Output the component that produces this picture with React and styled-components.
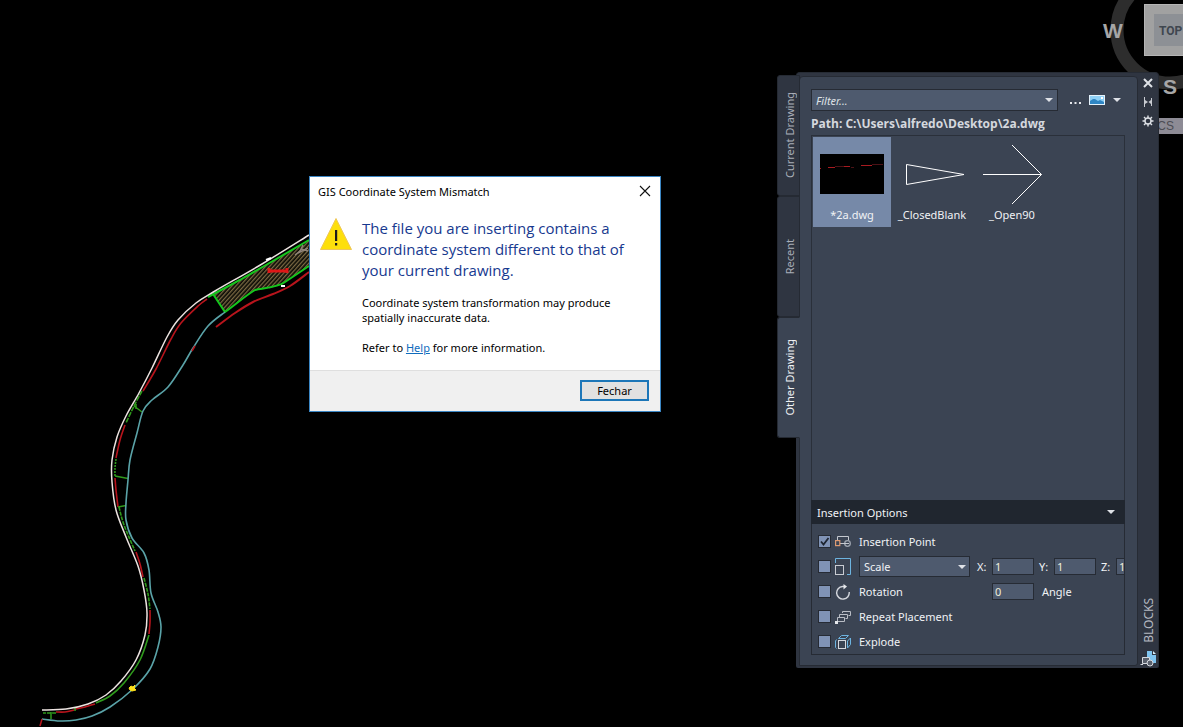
import React, { useState } from 'react';
import styled, { createGlobalStyle } from 'styled-components'

const GlobalStyle = createGlobalStyle`
    *{
        box-sizing:border-box;
    }
    body{
        margin:0;
        background:#000;
        font-family: "Noto Sans", "Open Sans", sans-serif;
        font-size:11px;
        line-height:15px;
    }
    button, input, select{
        font: inherit;
        color: inherit;
        margin:0;
    }
    h1, h2, p{
        margin:0;
    }
`

const Workspace = styled.main`
    position:relative;
    min-height:100vh;
    overflow:hidden;
    background:#000;
`

const Drawing = styled.svg`
    position:absolute;
    top:0;
    left:0;
    width:100%;
    height:100%;
    fill:none;
`

const Compass = styled.svg`
    position:absolute;
    top:0;
    right:0;
    font-family: "Liberation Sans", Arial, sans-serif;
    font-weight:bold;
    .face{
        font-family: Roboto, sans-serif;
    }
`

const Ucs = styled.button`
    position:absolute;
    top:118px;
    right:0;
    height:16px;
    padding:0 9px 0 2px;
    border:0;
    background:#8d8b95;
    color:#4c4c54;
    font-family: "Liberation Sans", Arial, sans-serif;
    font-size:12px;
    line-height:14px;
`

/* ---- blocks palette ---- */

const Palette = styled.section`
    position:absolute;
    top:72px;
    right:24px;
    height:calc(100vh - 131px);
    min-height:400px;
    display:flex;
    align-items:stretch;
    color:#f0f2f5;
`

const Tabs = styled.div`
    position:relative;
    display:flex;
    flex-direction:column;
    align-self:flex-start;
    margin:3px -4px 0 0;
    width:23px;
`

const Tab = styled.button`
    height:121px;
    padding:0 0 0 2px;
    display:flex;
    align-items:center;
    justify-content:center;
    border:1px solid #252a33;
    border-right-color: ${({ $active }) => ($active ? '#3b4453' : '#252a33')};
    border-radius:3px 0 0 3px;
    background: ${({ $active }) => ($active ? '#3b4453' : '#2f3541')};
    color: ${({ $active }) => ($active ? '#f0f2f5' : '#a9aeb8')};
    span{
        writing-mode:vertical-rl;
        transform: rotate(180deg);
    }
`

const Frame = styled.div`
    display:flex;
    width:363px;
    background:#2f3541;
    border:1px solid #262b34;
    border-width:1px 1px 0 0;
    border-radius:4px 4px 2px 2px;
`

const Panel = styled.div`
    flex:1;
    min-width:0;
    display:flex;
    flex-direction:column;
    margin:3px 0 2px 3px;
    padding:12px 12px 10px 11px;
    background:#3b4453;
    border:1px solid #262b34;
    border-radius:4px 4px 3px 0;
`

const Side = styled.div`
    width:20px;
    padding-bottom:1px;
    display:flex;
    flex-direction:column;
    align-items:center;
    color:#d5d8de;
`

const SideButton = styled.button`
    width:20px;
    height:19px;
    padding:0;
    border:0;
    background:none;
    line-height:0;
`

const SideTitle = styled.h2`
    margin-top:auto;
    margin-bottom:8px;
    font-size:12px;
    font-weight:normal;
    color:#b4b8c0;
    writing-mode:vertical-rl;
    transform: rotate(180deg);
`

const FilterRow = styled.div`
    display:flex;
    align-items:center;
    gap:8px;
    padding-right:4px;
`

const Combo = styled.div`
    flex:1;
    display:flex;
    align-items:center;
    height:22px;
    margin-right:4px;
    background:#4e5a6e;
    border:1px solid #262b34;
    input{
        flex:1;
        min-width:0;
        padding:0 4px;
        border:0;
        outline:0;
        background:none;
        font-style:italic;
        &::placeholder{
            color:#dfe2e7;
            opacity:1;
        }
    }
`

const IconButton = styled.button`
    padding:0;
    min-width:${({ $wide }) => ($wide ? '16px' : '8px')};
    height:16px;
    display:flex;
    align-items:center;
    justify-content:center;
    border:0;
    background:none;
`

const Path = styled.p`
    margin:5px 0 4px;
    font-family: "Open Sans", sans-serif;
    font-size:12px;
    font-weight:bold;
    color:#d5d8de;
    white-space:nowrap;
`

const Blocks = styled.div`
    flex:1;
    display:flex;
    align-items:flex-start;
    gap:2px;
    padding:1px;
    border:1px solid #2a303a;
    border-bottom:0;
`

const Block = styled.button`
    width:78px;
    height:90px;
    padding:5px 0 4px;
    display:flex;
    flex-direction:column;
    align-items:center;
    gap:1px;
    border:0;
    background: ${({ $selected }) => ($selected ? '#7689a8' : 'none')};
    white-space:nowrap;
`

const OptionsHeader = styled.button`
    height:24px;
    padding:0 10px 0 6px;
    display:flex;
    align-items:center;
    justify-content:space-between;
    border:0;
    background:#20262f;
`

const Options = styled.div`
    padding:5px 0 0 6px;
    border:1px solid #262b34;
    border-top:0;
    overflow:hidden;
`

const Option = styled.div`
    display:flex;
    align-items:center;
    height:25px;
    white-space:nowrap;
`

const Check = styled.label`
    flex:none;
    min-width:${({ $column }) => ($column ? '174px' : '0')};
    display:flex;
    align-items:center;
    gap:4px;
    svg{
        flex:none;
    }
    span{
        margin-left:4px;
    }
    input{
        appearance:none;
        width:13px;
        height:13px;
        border:1px solid #262b34;
        background:#8093b5;
    }
`

const CheckBox = styled.span`
    && {
        margin:0;
    }
    display:grid;
    > *{
        grid-area:1 / 1;
        margin:0;
    }
    svg{
        pointer-events:none;
    }
`

const SelectBox = styled.div`
    display:grid;
    align-items:center;
    flex:none;
    width:111px;
    height:21px;
    margin:0 7px 0 8px;
    select, svg{
        grid-area:1 / 1;
    }
    select{
        appearance:none;
        width:100%;
        height:21px;
        padding:0 4px;
        border:1px solid #262b34;
        border-radius:0;
        background:#4e5a6e;
    }
    svg{
        justify-self:end;
        margin-right:4px;
        pointer-events:none;
    }
`

const Field = styled.label`
    flex:none;
    display:flex;
    align-items:center;
    gap:8px;
    margin-right:5px;
    span{
        width:15px;
        margin-right:-8px;
    }
    input{
        width:42px;
        height:17px;
        padding:0 2px;
        border:1px solid #262b34;
        background:#4e5a6e;
        color:#f0eedc;
    }
`

/* ---- message box ---- */

const Dialog = styled.section`
    position:absolute;
    top:176px;
    left:309px;
    width:352px;
    border:1px solid #3b86c4;
    background:#fff;
    color:#000;
`

const TitleBar = styled.header`
    display:flex;
    align-items:center;
    justify-content:space-between;
    height:30px;
    padding:0 8px 2px;
    h1{
        font-size:11px;
        font-weight:normal;
    }
`

const CloseButton = styled.button`
    width:14px;
    height:14px;
    padding:0;
    border:0;
    background:none;
    line-height:0;
`

const Message = styled.div`
    display:flex;
    align-items:flex-start;
    gap:10px;
    padding:11px 16px 15px 10px;
    > svg{
        flex:none;
    }
    h2{
        margin-bottom:14px;
        font-family: "Open Sans", sans-serif;
        font-size:15px;
        line-height:21px;
        font-weight:normal;
        color:#17398f;
    }
    p + p{
        margin-top:15px;
    }
    a{
        color:#0f6cbd;
    }
`

const Footer = styled.footer`
    display:flex;
    justify-content:flex-end;
    padding:9px 11px 10px;
    border-top:1px solid #dfdfdf;
    background:#f0f0f0;
    button{
        width:69px;
        height:21px;
        padding:0;
        border:2px solid #1c76b8;
        background:#e1e1e1;
        line-height:15px;
    }
`

const Arrow = () => (
    <svg width="8" height="4" viewBox="0 0 8 4"><path d="M0 0h8L4 4z" fill="#dfe2e7" /></svg>
)

// Catmull-Rom spline through the survey points
const curve = (points) => {
    let d = `M${points[0]}`
    for (let i = 0; i < points.length - 1; i++) {
        const a = points[i - 1] || points[i]
        const b = points[i]
        const c = points[i + 1]
        const e = points[i + 2] || c
        d += `C${b[0] + (c[0] - a[0]) / 6} ${b[1] + (c[1] - a[1]) / 6} ${c[0] - (e[0] - b[0]) / 6} ${c[1] - (e[1] - b[1]) / 6} ${c}`
    }
    return d
}

const RED = '#b8141c'
const GREEN = '#2f9a1c'

const outer = [
    [309, 235], [262, 264], [215, 291], [196, 303], [178, 320], [167, 337], [152, 368], [139, 393],
    [126, 416], [117, 437], [112, 460], [112, 482], [116, 510], [126, 537], [138, 566], [144, 590],
    [147, 613], [145, 635], [136, 660], [121, 681], [106, 695], [88, 704], [66, 709], [42, 710],
]

const river = [
    [225, 312], [208, 326], [193, 348], [183, 365], [168, 387], [152, 400], [143, 411], [137, 433],
    [130, 460], [128, 480], [126, 503], [126, 520], [132, 538], [144, 553], [149, 570], [151, 593],
    [158, 612], [161, 627], [158, 647], [150, 669], [133, 689], [110, 707], [92, 716], [76, 720],
    [60, 721], [42, 719],
]

const segments = [
    { color: RED, points: [[207, 299], [198, 306], [181, 323], [171, 339], [156, 369], [143, 391]] },
    { color: GREEN, dash: '5 1', points: [[142, 391], [134, 406], [126, 423]] },
    { color: RED, points: [[125, 425], [120, 440], [116, 458]] },
    { color: GREEN, dash: '2 1', points: [[116, 459], [115, 468], [115, 477]] },
    { color: RED, points: [[115, 478], [116, 490], [118, 507]] },
    { color: GREEN, dash: '4 1', points: [[119, 507], [124, 525], [135, 551]] },
    { color: RED, points: [[136, 552], [140, 564], [143, 577]] },
    { color: GREEN, dash: '4 1', points: [[144, 578], [148, 594], [150, 609]] },
    { color: RED, points: [[150, 610], [150, 622], [149, 634]] },
    { color: GREEN, points: [[149, 635], [140, 660], [124, 683], [110, 696], [96, 703]] },
    { color: RED, points: [[95, 704], [85, 707], [75, 709]] },
    { color: GREEN, points: [[75, 708], [75, 711]] },
    { color: RED, points: [[74, 710], [65, 712], [56, 712]] },
    { color: GREEN, dash: '4 1', points: [[56, 713], [43, 713]] },
]

const Plan = () => (
    <Drawing aria-hidden="true">
        <defs>
            <pattern id="hatch" width="3" height="3" patternUnits="userSpaceOnUse" patternTransform="rotate(42)">
                <rect width="3" height="3" fill="#0b0b05" />
                <rect width="1.300" height="3" fill="#7c6a44" />
            </pattern>
        </defs>
        <path d="M213 294L309 240V266L285 282L272 288L255 290L225 312Z" fill="url(#hatch)" />
        <path d="M208 297L240 280L266 265L309 240" stroke="#14c71d" strokeWidth="2" />
        <path d="M213 294L225 312C235 305 245 296 255 290C262 288 277 288 285 282L309 266" stroke="#14c71d" strokeWidth="2" />
        <path d={curve([[216, 327], [235, 313], [253, 302], [273, 294], [290, 286], [309, 272]])} stroke={RED} strokeWidth="2" />
        {segments.map(({ color, dash, points }) => (
            <path key={points[0].join()} d={curve(points)} stroke={color} strokeWidth="1.6" strokeDasharray={dash} />
        ))}
        <path d="M134 406L142 412M136 404V409M115 476L128 478.500M118 507L126 505.500M51 712V719" stroke={GREEN} strokeWidth="1.500" />
        <path d={curve(river)} stroke="#5aa3a8" strokeWidth="1.600" />
        <path d="M195 346L192 351M42 719L40 726" stroke={RED} strokeWidth="1.500" />
        <path d={curve(outer)} stroke="#ece3e0" strokeWidth="1.500" />
        <path d="M270 271H286M269 268V273M287 268V273" stroke="#df1717" strokeWidth="3" />
        <path d="M266 260L271 258" stroke="#fff" strokeWidth="2" />
        <path d="M281 286H285" stroke="#fff" strokeWidth="2" />
        <path d="M295 255L300 251L303 245M298 253L308 248M301 249L308 251" stroke="#8f8378" strokeWidth="1.500" />
        <path d="M129 688L131 686L133 687L135 685L134 688L136 690L132 691L130 690Z" fill="#ffe21a" stroke="#ffe21a" />
    </Drawing>
)

const ViewCube = () => (
    <Compass width="83" height="100" viewBox="1100 0 83 100">
        <circle cx="1170" cy="30" r="53" fill="none" stroke="#2d2d2d" strokeWidth="13" />
        <rect x="1144" y="4" width="52" height="52" fill="#a1a1a1" />
        <rect x="1144.500" y="4.500" width="51" height="51" fill="none" stroke="#b5b5b5" />
        <rect x="1154" y="14" width="32" height="32" fill="#8d9095" />
        <text className="face" x="1159" y="35" fontSize="12" fill="#3f464f">TOP</text>
        <text x="1103" y="38" fontSize="21" fill="#a6a6a6">W</text>
        <text x="1163" y="94" fontSize="21" fill="#a6a6a6">S</text>
    </Compass>
)

const icons = {
    point: (
        <svg width="16" height="16" viewBox="0 0 16 16" fill="none">
            <path d="M2.500 6V2.500H13.500V6.500M5 9.500H10" stroke="#c4c8cf" />
            <rect x=".6" y="6.600" width="4.200" height="5" stroke="#dd9a72" strokeWidth="1.200" />
            <circle cx="12.500" cy="9.500" r="2.800" stroke="#9ea5b0" strokeWidth="1.300" />
            <path d="M8 9.500h6" stroke="#c4c8cf" />
        </svg>
    ),
    scale: (
        <svg width="16" height="17" viewBox="0 0 16 17" fill="none">
            <path d="M.5 5V.5H15.500V16.500H12" stroke="#6db4e0" />
            <rect x=".5" y="7.500" width="8" height="9" stroke="#c9ccd2" />
        </svg>
    ),
    rotation: (
        <svg width="16" height="16" viewBox="0 0 16 16" fill="none">
            <path d="M9 2.500H7.500A6.300 6.300 0 1 0 14.200 8" stroke="#d5d8de" strokeWidth="1.400" />
            <path d="M8.500 0L12 2.500L8.500 5.500Z" fill="#e6e8ec" />
        </svg>
    ),
    repeat: (
        <svg width="16" height="16" viewBox="0 0 16 16" fill="none" stroke="#b9bdc5">
            <path d="M7.500 4V2.500H15.500V6.500H13.500" />
            <path d="M4.500 8V5.500H12.500V9.500H10.500" />
            <path d="M2.500 12V8.500H9.500V12.500H3" />
            <rect x="0" y="12" width="3" height="3" fill="#e6e8ec" stroke="none" />
        </svg>
    ),
    explode: (
        <svg width="16" height="16" viewBox="0 0 16 16" fill="none">
            <rect x="3.500" y="6.500" width="7" height="8" stroke="#d5d8de" />
            <path d="M3.500 4.500L6.500 1.500H13.500L10.500 4.500Z" stroke="#6db4e0" />
            <path d="M12.500 7L15.500 4V10.500L12.500 14Z" stroke="#6db4e0" />
            <path d="M1.500 5.500L.5 7V13.500L1.500 14.500" stroke="#6db4e0" />
        </svg>
    ),
}

const OptionCheck = ({ icon, label, hideLabel, column, defaultChecked }) => {
    const [checked, setChecked] = useState(!!defaultChecked)
    return (
        <Check $column={column}>
            <CheckBox>
                <input type="checkbox" aria-label={label} checked={checked} onChange={() => setChecked(!checked)} />
                {checked && (
                    <svg width="13" height="13" viewBox="0 0 13 13"><path d="M3 6.500L5.500 9.500L10.500 3" fill="none" stroke="#1d2530" strokeWidth="1.800" /></svg>
                )}
            </CheckBox>
            {icons[icon]}
            {!hideLabel && <span>{label}</span>}
        </Check>
    )
}

const BlocksPalette = () => (
    <Palette>
        <Tabs>
            <Tab><span>Current Drawing</span></Tab>
            <Tab><span>Recent</span></Tab>
            <Tab $active><span>Other Drawing</span></Tab>
        </Tabs>
        <Frame>
            <Panel>
                <FilterRow>
                    <Combo>
                        <input placeholder="Filter..." aria-label="Filter" />
                        <IconButton $wide aria-label="Show filters"><Arrow /></IconButton>
                    </Combo>
                    <IconButton aria-label="Browse">
                        <svg width="11" height="10" viewBox="0 0 11 10"><path d="M0 7h2v2H0zM4.500 7h2v2h-2zM9 7h2v2H9z" fill="#e6e8ec" /></svg>
                    </IconButton>
                    <IconButton $wide aria-label="Thumbnail size">
                        <svg width="16" height="10" viewBox="0 0 16 10">
                            <rect width="16" height="10" fill="#e4f2fb" />
                            <rect x="1" y="1" width="14" height="8" fill="#8fd0f5" />
                            <path d="M1 6L4 4L6 4L9 6L11 5L15 7V9H1Z" fill="#2f86c4" />
                            <rect x="12" y="2" width="2" height="2" fill="#fff" />
                        </svg>
                    </IconButton>
                    <IconButton aria-label="View options"><Arrow /></IconButton>
                </FilterRow>
                <Path>Path: C:\Users\alfredo\Desktop\2a.dwg</Path>
                <Blocks>
                    <Block $selected>
                        <svg width="64" height="64" viewBox="0 0 64 64" fill="none">
                            <rect y="12" width="64" height="40" fill="#000" />
                            <path d="M0 26.500H1M8 25.500H15M24 24.500H30M41 23.500H52" stroke="#a81a20" />
                            <path d="M15 24.500H24M31 25.500H34M52 22.500H63" stroke="#4c1216" />
                        </svg>
                        *2a.dwg
                    </Block>
                    <Block>
                        <svg width="64" height="64" viewBox="0 0 64 64" fill="none" stroke="#fff">
                            <path d="M6.500 22.500L64 32.500L6.500 42.500Z" />
                        </svg>
                        _ClosedBlank
                    </Block>
                    <Block>
                        <svg width="64" height="64" viewBox="0 0 64 64" fill="none" stroke="#fff">
                            <path d="M3 32.500H61.500M32 3L61.500 32.500L32 62" />
                        </svg>
                        _Open90
                    </Block>
                </Blocks>
                <OptionsHeader>Insertion Options <Arrow /></OptionsHeader>
                <Options>
                    <Option>
                        <OptionCheck icon="point" label="Insertion Point" defaultChecked />
                    </Option>
                    <Option>
                        <OptionCheck icon="scale" label="Scale" hideLabel />
                        <SelectBox>
                            <select aria-label="Scale mode" defaultValue="Scale">
                                <option>Scale</option>
                                <option>Uniform Scale</option>
                            </select>
                            <Arrow />
                        </SelectBox>
                        <Field><span>X:</span><input defaultValue="1" /></Field>
                        <Field><span>Y:</span><input defaultValue="1" /></Field>
                        <Field><span>Z:</span><input defaultValue="1" /></Field>
                    </Option>
                    <Option>
                        <OptionCheck icon="rotation" label="Rotation" column />
                        <Field><input defaultValue="0" />Angle</Field>
                    </Option>
                    <Option>
                        <OptionCheck icon="repeat" label="Repeat Placement" />
                    </Option>
                    <Option>
                        <OptionCheck icon="explode" label="Explode" />
                    </Option>
                </Options>
            </Panel>
            <Side>
                <SideButton aria-label="Close">
                    <svg width="10" height="10" viewBox="0 0 10 10"><path d="M1 1L9 9M9 1L1 9" stroke="#dfe2e7" strokeWidth="2" /></svg>
                </SideButton>
                <SideButton aria-label="Auto-hide">
                    <svg width="10" height="10" viewBox="0 0 10 10" fill="#c9ccd2"><path d="M1 0H2V10H1zM2 3L5 5L2 7zM8 1H9V9H8zM8 3L5.500 5L8 7z" /></svg>
                </SideButton>
                <SideButton aria-label="Properties">
                    <svg width="12" height="12" viewBox="0 0 12 12" fill="none" stroke="#dfe2e7">
                        <circle cx="6" cy="6" r="3" strokeWidth="1.400" />
                        <path d="M6 .5V3M6 9V11.500M.5 6H3M9 6H11.500M2 2L4 4M8 8L10 10M10 2L8 4M4 8L2 10" strokeWidth="1.400" />
                    </svg>
                </SideButton>
                <SideTitle>BLOCKS</SideTitle>
                <svg width="16" height="16" viewBox="0 0 16 16" fill="none">
                    <path d="M7 0H12V4H16V12H7Z" fill="#7fc4f0" />
                    <path d="M13 0L16 3H13Z" fill="#d9effb" />
                    <path d="M3 13.500H.5M2.500 6.500H9.500V12.500H2.500Z" fill="#59606c" stroke="#d5d8de" />
                    <circle cx="10" cy="12" r="3" fill="#59606c" stroke="#d5d8de" />
                </svg>
            </Side>
        </Frame>
    </Palette>
)

const MismatchDialog = () => (
    <Dialog role="dialog" aria-labelledby="mismatch-title">
        <TitleBar>
            <h1 id="mismatch-title">GIS Coordinate System Mismatch</h1>
            <CloseButton aria-label="Close">
                <svg width="12" height="12" viewBox="0 0 12 12"><path d="M1 1L11 11M11 1L1 11" stroke="#111" strokeWidth="1.100" /></svg>
            </CloseButton>
        </TitleBar>
        <Message>
            <svg width="32" height="32" viewBox="0 0 32 32">
                <path d="M16 .5L31.500 31.500H.5Z" fill="#fddf0b" stroke="#eec75a" strokeLinejoin="round" />
                <path d="M15 12H17.200V23H15zM15 25H17.200V27.500H15z" fill="#1b1b1b" />
            </svg>
            <div>
                <h2>The file you are inserting contains a coordinate system different to that of your current drawing.</h2>
                <p>Coordinate system transformation may produce spatially inaccurate data.</p>
                <p>Refer to <a href="#help">Help</a> for more information.</p>
            </div>
        </Message>
        <Footer>
            <button>Fechar</button>
        </Footer>
    </Dialog>
)

const App = () => {
    return (
        <Workspace>
            <GlobalStyle />
            <Plan />
            <ViewCube />
            <Ucs>WCS</Ucs>
            <BlocksPalette />
            <MismatchDialog />
        </Workspace>
    )
}

export default App
